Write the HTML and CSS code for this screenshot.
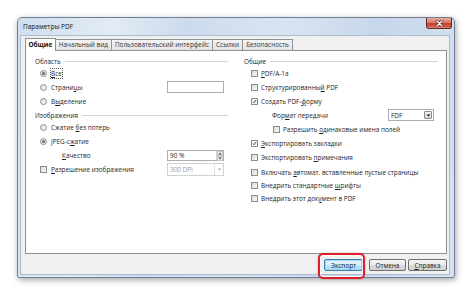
FILE: index.html
```html
<!DOCTYPE html>
<html>
<head>
<meta charset="utf-8">
<link rel="stylesheet" href="styles.css">
</head>
<body>
<div class="window">
  <div class="titlebar">
    <span class="title">Параметры PDF</span>
    <div class="close">
      <svg width="9" height="7" viewBox="0 0 9 7"><path d="M2 1 L7 6 M7 1 L2 6" stroke="#5a1e16" stroke-width="2.6" stroke-linecap="round"/><path d="M2 1 L7 6 M7 1 L2 6" stroke="#ffffff" stroke-width="1.4" stroke-linecap="round"/></svg>
    </div>
  </div>
  <div class="client">
    <div class="tabs">
      <div class="tab active">Общие</div>
      <div class="tab">Начальный вид</div>
      <div class="tab">Пользовательский интерфейс</div>
      <div class="tab">Ссылки</div>
      <div class="tab">Безопасность</div>
    </div>
    <div class="panel">
      <div class="col col-left">
        <div class="group-label"><span>Область</span><i class="rule"></i></div>
        <div class="row"><span class="radio on"></span><span class="focus"><u>В</u>се</span></div>
        <div class="row"><span class="radio"></span><span>Страни<u>ц</u>ы</span><span class="textbox"></span></div>
        <div class="row"><span class="radio"></span><span>В<u>ы</u>деление</span></div>
        <div class="group-label"><span>Изображения</span><i class="rule"></i></div>
        <div class="row"><span class="radio"></span><span>Сжатие <u>б</u>ез потерь</span></div>
        <div class="row"><span class="radio on"></span><span>JPEG-с<u>ж</u>атие</span></div>
        <div class="row sub"><span><u>К</u>ачество</span>
          <span class="field spin"><span class="val">90 %</span>
            <span class="spin-btns">
              <span class="sb"><svg width="5" height="3" viewBox="0 0 5 3"><path d="M0.5 2.6 L2.5 0.4 L4.5 2.6Z" fill="#444"/></svg></span>
              <span class="sb"><svg width="5" height="3" viewBox="0 0 5 3"><path d="M0.5 0.4 L2.5 2.6 L4.5 0.4Z" fill="#444"/></svg></span>
            </span>
          </span>
        </div>
        <div class="row"><span class="check"></span><span><u>Р</u>азрешение изображения</span>
          <span class="field combo disabled"><span class="val">300 DPI</span><span class="drop"><svg width="5" height="3" viewBox="0 0 5 3"><path d="M0.5 0.4 L2.5 2.6 L4.5 0.4Z" fill="#b0b0b0"/></svg></span></span>
        </div>
      </div>
      <div class="col col-right">
        <div class="group-label"><span>Общие</span><i class="rule"></i></div>
        <div class="row"><span class="check"></span><span><u>P</u>DF/A-1a</span></div>
        <div class="row"><span class="check"></span><span>Структурированны<u>й</u> PDF</span></div>
        <div class="row"><span class="check on"><svg width="7" height="7" viewBox="0 0 7 7"><path d="M1.4 3.6 L2.9 5.2 L5.7 1.4" fill="none" stroke="#2a2a2a" stroke-width="1.1"/></svg></span><span>Создать PDF-<u>ф</u>орму</span></div>
        <div class="row sub"><span>Фор<u>м</u>ат передачи</span>
          <span class="field combo fdf"><span class="val">FDF</span><span class="drop btn"><svg width="5" height="3" viewBox="0 0 5 3"><path d="M0.5 0.4 L2.5 2.6 L4.5 0.4Z" fill="#111"/></svg></span></span>
        </div>
        <div class="row sub2"><span class="check"></span><span>Разрешить <u>о</u>динаковые имена полей</span></div>
        <div class="row"><span class="check on"><svg width="7" height="7" viewBox="0 0 7 7"><path d="M1.4 3.6 L2.9 5.2 L5.7 1.4" fill="none" stroke="#2a2a2a" stroke-width="1.1"/></svg></span><span><u>Э</u>кспортировать закладки</span></div>
        <div class="row"><span class="check"></span><span>Экспортировать <u>п</u>римечания</span></div>
        <div class="row tight first"><span class="check"></span><span>Включать <u>а</u>втомат. вставленные пустые страницы</span></div>
        <div class="row tight"><span class="check"></span><span>Внедрить стандартные <u>ш</u>рифты</span></div>
        <div class="row tight"><span class="check"></span><span>Внедрить этот док<u>у</u>мент в PDF</span></div>
      </div>
    </div>
    <div class="buttons">
      <div class="button default">Экспорт</div>
      <div class="button cancel">Отмена</div>
      <div class="button help"><u>С</u>правка</div>
    </div>
  </div>
</div>
</body>
</html>
```

FILE: styles.css
```css
* { box-sizing: border-box; }

html, body {
  margin: 0;
  padding: 0;
  background: #ffffff;
}

body {
  width: 474px;
  height: 298px;
  overflow: hidden;
  font-family: "Open Sans", "Noto Sans", sans-serif;
  font-size: 6.4px;
  color: #1e1e1e;
}

u { text-decoration: underline; text-underline-offset: 1px; }

.window {
  margin: 17px 0 0 17px;
  width: 438px;
  height: 261px;
  border: 1px solid #6f8096;
  border-radius: 5px 5px 2px 2px;
  background: linear-gradient(100deg, #d0deee 0%, #e2ebf6 20%, #ccdbec 35%, #d9e4f2 55%, #c7d7ea 75%, #d6e2f0 100%);
  box-shadow: 1px 2px 6px rgba(0, 0, 0, 0.35);
  display: flex;
  flex-direction: column;
  padding: 0 5px 3px 3px;
}

.titlebar {
  height: 18px;
  display: flex;
  align-items: flex-start;
  margin-right: -3px;
}

.title {
  padding-left: 2px;
  line-height: 18px;
  color: #111;
  font-size: 6.5px;
}

.close {
  margin-left: auto;
  width: 26px;
  height: 11px;
  border: 1px solid #6a2b22;
  border-top: none;
  border-radius: 0 0 3px 3px;
  background: linear-gradient(to bottom, #e9a99c 0%, #d67a69 45%, #c3432f 55%, #cf5c45 85%, #e1917f 100%);
  display: flex;
  align-items: center;
  justify-content: center;
}

.client {
  flex: 1;
  background: #f0f0f0;
  box-shadow: 0 0 0 1px #aabcd2;
  display: flex;
  flex-direction: column;
  padding: 3px 2px 0 4px;
}

.tabs {
  height: 11px;
  display: flex;
  position: relative;
  z-index: 1;
}

.tab {
  height: 11px;
  padding: 0 3px;
  line-height: 10px;
  border: 1px solid #8e9297;
  border-bottom: none;
  margin-left: -1px;
  background: linear-gradient(to bottom, #f4f4f4, #e3e3e3);
  color: #333;
  white-space: nowrap;
}

.tab:first-child { margin-left: 0; }

.tab.active {
  background: #ffffff;
  font-weight: 700;
  height: 13px;
  margin-top: -1px;
  line-height: 12px;
  color: #111;
  padding: 0 2.5px;
}

.panel {
  flex: 1;
  background: #ffffff;
  border: 1px solid #8e9297;
  display: flex;
  padding: 5px 6px 0 9px;
  gap: 14px;
}

.col { display: flex; flex-direction: column; }
.col-left { width: 195px; }
.col-right { width: 196px; }

.group-label {
  height: 10px;
  display: flex;
  align-items: center;
  color: #222;
}

.group-label .rule {
  flex: 1;
  height: 1px;
  margin-left: 4px;
  margin-right: 2px;
  background: #d5d5d5;
}

.col-left .group-label:nth-child(5) { margin-top: 2px; }

.row {
  height: 14px;
  display: flex;
  align-items: center;
  white-space: nowrap;
}

.row.tight { height: 13px; }
.row.first { margin-top: 2px; }

.col-left .row { padding-left: 5px; }
.col-right .row { padding-left: 7px; }
.col-left .row.sub { padding-left: 27px; }
.col-right .row.sub { padding-left: 28px; }
.col-right .row.sub2 { padding-left: 29px; }

.radio, .check {
  width: 7px;
  height: 7px;
  flex: none;
  margin-right: 4px;
  border: 1px solid #8d8d8d;
  background: linear-gradient(135deg, #dcdcdc, #f7f7f7);
  display: flex;
  align-items: center;
  justify-content: center;
}

.col-right .check { margin-right: 3px; }

.radio { border-radius: 50%; }

.radio.on::after {
  content: "";
  width: 3px;
  height: 3px;
  border-radius: 50%;
  background: radial-gradient(circle at 35% 35%, #7d8fa8, #263850);
}

.check.on { background: #f4f4f4; }

.focus { outline: 1px dotted #555; outline-offset: 0; }

.textbox {
  margin-left: auto;
  margin-right: 6px;
  width: 57px;
  height: 12px;
  border: 1px solid #abadb3;
  background: #fff;
}

.field {
  margin-left: auto;
  margin-right: 6px;
  display: flex;
  align-items: stretch;
  border: 1px solid #abadb3;
  background: #fff;
}

.field .val {
  flex: 1;
  padding-left: 2px;
  display: flex;
  align-items: center;
}

.spin { width: 57px; height: 11px; }

.spin-btns {
  width: 7px;
  display: flex;
  flex-direction: column;
  border-left: 1px solid #d2d2d2;
}

.sb {
  flex: 1;
  display: flex;
  align-items: center;
  justify-content: center;
  background: linear-gradient(to bottom, #f5f5f5, #e2e2e2);
  border: 1px solid #c8c8c8;
}

.combo { width: 57px; height: 13px; }

.combo.disabled { border-color: #cfd1d5; color: #9a9a9a; }

.drop {
  width: 9px;
  display: flex;
  align-items: center;
  justify-content: center;
  border-left: 1px solid #e0e0e0;
}

.combo.fdf { width: 46px; height: 12px; }

.drop.btn {
  width: 8px;
  margin: 1px;
  border: 1px solid #8e8e8e;
  border-radius: 1px;
  background: linear-gradient(to bottom, #f4f4f4, #d6d6d6);
}

.buttons {
  height: 20px;
  display: flex;
  justify-content: flex-end;
  align-items: flex-start;
  padding-top: 5px;
}

.button {
  position: relative;
  height: 12px;
  border: 1px solid #707070;
  border-radius: 2px;
  background: linear-gradient(to bottom, #f3f3f3 0%, #ebebeb 48%, #dddddd 52%, #cfcfcf 100%);
  display: flex;
  align-items: center;
  justify-content: center;
  color: #1a1a1a;
}

.button.default {
  width: 39px;
  border-color: #3c7fb1;
  box-shadow: inset 0 0 0 1px #a6d3f0;
  background: linear-gradient(to bottom, #eaf6fd 0%, #d9f0fc 48%, #bee6fd 52%, #a7d9f5 100%);
}

.button.default::after {
  content: "";
  position: absolute;
  left: -7px;
  right: -3px;
  top: -7px;
  bottom: -9px;
  border: 2px solid #df1f2a;
  border-radius: 5px;
  box-shadow: 0 0 2px rgba(0, 0, 0, 0.35), inset 0 0 0 1px rgba(255, 255, 255, 0.8);
}

.button.cancel { width: 37px; margin-left: 6px; }
.button.help { width: 39px; margin-left: 2px; }
```
